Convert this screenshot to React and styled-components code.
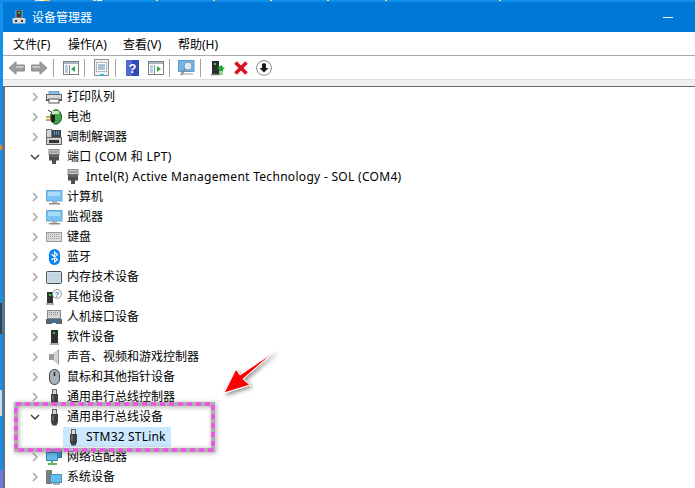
import React from 'react'
import styled, { createGlobalStyle } from 'styled-components'

const GlobalStyle = createGlobalStyle`
  html, body { margin: 0; padding: 0; background: #1391ea; }
  body { width: 695px; height: 488px; overflow: hidden; }
  #root { width: 695px; height: 488px; }
`
const FONT = `"Noto Sans", "Noto Sans CJK SC", sans-serif`

const Desktop = styled.div`
  position: relative;
  width: 695px;
  height: 488px;
  overflow: hidden;
  padding: 2px 0 0 3px;
  box-sizing: border-box;
  font-family: ${FONT};
`
const Bit = styled.div`
  position: absolute;
  left: ${p => p.$x}px;
  top: ${p => p.$y}px;
  width: ${p => p.$w}px;
  height: ${p => p.$h}px;
  background: ${p => p.$c};
`
const Window = styled.div`
  display: flex;
  flex-direction: column;
  height: 486px;
  background: #fff;
`
const TitleBar = styled.div`
  height: 30px;
  flex: none;
  background: #0078d7;
  display: flex;
  align-items: center;
  color: #fff;
  font-size: 12px;
  padding-left: 9px;
  gap: 6px;
  box-sizing: border-box;
`
const Minimize = styled.div`
  width: 10px;
  height: 1px;
  background: #fff;
  margin-left: auto;
  margin-right: 22px;
`
const MenuBar = styled.div`
  height: 23px;
  flex: none;
  display: flex;
  align-items: center;
  padding-left: 10px;
  gap: 18px;
  font-size: 12px;
  color: #000;
  border-bottom: 1px solid #a9a9a9;
`
const MenuItem = styled.span`
  width: 37px;
  white-space: nowrap;
`
const Toolbar = styled.div`
  height: 23px;
  flex: none;
  display: flex;
  align-items: center;
  padding-left: 2px;
`
const ToolButton = styled.div`
  width: 23px;
  height: 22px;
  display: flex;
  align-items: center;
  justify-content: center;
`
const ToolSep = styled.div`
  width: 1px;
  height: 18px;
  background: #a0a0a0;
  margin: 0 5px 0 2px;
`
const StatusGap = styled.div`
  height: 6px;
  flex: none;
  background: #efefef;
  border-top: 1px solid #dcdcdc;
`
const Tree = styled.div`
  flex: 1;
  border-top: 1px solid #6d6d6d;
  border-left: 2px solid #6d6d6d;
  display: flex;
  flex-direction: column;
  font-size: 12px;
  color: #000;
`
const Row = styled.div`
  height: 20px;
  flex: none;
  display: flex;
  align-items: center;
  white-space: nowrap;
`
const Chevron = styled.div`
  width: 12px;
  margin-left: 24px;
  margin-right: 4px;
  display: flex;
  justify-content: center;
`
const IconSlot = styled.div`
  width: 18px;
  height: 18px;
  flex: none;
  display: flex;
  align-items: center;
  justify-content: center;
  margin-right: 4px;
`
const ChildRow = styled(Row)`
  padding-left: 58px;
`
const ChildBody = styled.div`
  display: flex;
  align-items: center;
  height: 20px;
  padding-right: 5px;
  padding-left: 1px;
  background: ${p => (p.$selected ? '#cce8ff' : 'transparent')};
`
const ChildIcon = styled(IconSlot)`
  margin-right: 4px;
`
const Label = styled.span`
  padding-bottom: 2px;
  letter-spacing: ${p => p.$spacing || 0}px;
`
const Marquee = styled.svg`
  position: absolute;
  left: 6px;
  top: 394px;
  pointer-events: none;
`
const ArrowMark = styled.svg`
  position: absolute;
  left: 218px;
  top: 344px;
`

const Svg = ({ w = 16, h = 16, children }) => (
  <svg width={w} height={h} viewBox={`0 0 ${w} ${h}`}>{children}</svg>
)

const ChevronRight = () => (
  <svg width="8" height="10" viewBox="0 0 8 10"><path d="M2 1l4 4-4 4" fill="none" stroke="#a6a6a6" strokeWidth="1.5" /></svg>
)
const ChevronDown = () => (
  <svg width="10" height="8" viewBox="0 0 10 8"><path d="M1 2l4 4 4-4" fill="none" stroke="#404040" strokeWidth="1.5" /></svg>
)

const ArrowIcon = ({ flip }) => (
  <svg width="17" height="14" viewBox="0 0 17 14" style={flip ? { transform: 'scaleX(-1)' } : undefined}>
    <path d="M1 7L8 .8V4h8.4v6H8v3.2z" fill="#9c9c9c" stroke="#8a8a8a" />
    <path d="M8 5h7.5v2H8z" fill="#c9c9c9" />
  </svg>
)
const PanelIcon = ({ color, dir }) => (
  <Svg>
    <rect x="0.5" y="1.5" width="15" height="13" fill="#fff" stroke="#7f7f7f" />
    <rect x="1" y="2" width="14" height="2" fill="#a7b4c2" />
    <path d="M6.5 5v9" stroke="#8b8b8b" />
    <path d="M2 6h3M2 8h3M2 10h3M2 12h3" stroke="#6f9ac4" />
    <path d={dir === 'left' ? 'M12 6v6L8 9z' : 'M9 6v6l4-3z'} fill={color} />
  </Svg>
)
const SheetIcon = () => (
  <Svg w={16} h={18}>
    <rect x="0.5" y="0.5" width="14" height="16" fill="#f0f0f0" stroke="#8f8f8f" />
    <rect x="2.5" y="3.5" width="10" height="9" fill="#fff" stroke="#b9b9b9" />
    <path d="M4 6h7M4 8h7M4 10h7" stroke="#5e86b0" />
    <rect x="6" y="15" width="4" height="2" fill="#35b7ee" />
  </Svg>
)
const HelpIcon = () => (
  <Svg w={14} h={16}>
    <rect width="13" height="16" fill="#2f49b6" />
    <rect width="6" height="16" fill="#4f6ad0" />
    <text x="6.5" y="13" fontSize="13" fontWeight="700" textAnchor="middle" fill="#fff" fontFamily="Liberation Sans">?</text>
  </Svg>
)
const ScanIcon = () => (
  <Svg w={17} h={16}>
    <rect x="0.5" y="0.5" width="15.5" height="11" fill="#6fb7ea" stroke="#5a9ccc" />
    <circle cx="10" cy="6" r="4" fill="#d5ecfa" stroke="#8a9aa5" />
    <path d="M7 9l-4 6" stroke="#888" strokeWidth="2" />
    <path d="M4 14h11" stroke="#9b9b9b" />
  </Svg>
)
const TowerIcon = ({ upgrade }) => (
  <Svg w={14} h={16}>
    <path d="M1 1h7v13H1z" fill="#2e2e2e" />
    <rect x="3" y="3" width="2" height="2" fill="#27d13a" />
    <path d="M0 14.5h9" stroke="#777" strokeWidth="1.4" />
    {upgrade && <path d="M10 5l4 4h-2v2H8V9H6z" fill="#23a83a" />}
    {upgrade && <path d="M8 12h4M8 14h4" stroke="#23a83a" />}
  </Svg>
)
const RedCross = () => (
  <Svg w={14} h={14}>
    <path d="M1.5 1.5l11 11M12.5 1.5l-11 11" stroke="#d8141e" strokeWidth="3.6" />
  </Svg>
)
const DownCircle = () => (
  <Svg>
    <circle cx="8" cy="8" r="7.4" fill="#fff" stroke="#8a8a8a" />
    <path d="M6 3.5h4V8h2.5L8 12.5 3.5 8H6z" fill="#1c1c1c" />
  </Svg>
)

const PlugIcon = () => (
  <Svg w={12} h={16}>
    <rect x="1" y="0.5" width="10" height="5" fill="#c8c8c8" stroke="#8c8c8c" />
    <path d="M3 2v2M5 2v2M7 2v2M9 2v2" stroke="#777" />
    <path d="M1 5.5h10v6H8v3.5H4v-3.5H1z" fill="#4f4f4f" />
    <path d="M2 7h8" stroke="#7c7c7c" />
  </Svg>
)
const UsbIcon = () => (
  <Svg w={9} h={17}>
    <rect x="2.5" y="0.5" width="4" height="5" fill="#d8d8d8" stroke="#666" />
    <path d="M1 5h7v8l-1.5 3.5h-4L1 13z" fill="#3f3f3f" />
    <path d="M3 6v6" stroke="#8a8a8a" />
  </Svg>
)
const PrinterIcon = () => (
  <Svg w={16} h={13}>
    <rect x="3" y="0" width="10" height="4" fill="#7fc0ea" stroke="#6a7f90" strokeWidth="0.7" />
    <rect x="0.5" y="3.5" width="15" height="6" fill="#d8d8d8" stroke="#666" />
    <rect x="3" y="8" width="10" height="4" fill="#fff" stroke="#555" />
    <path d="M0 9h3M13 9h3" stroke="#333" />
  </Svg>
)
const BatteryIcon = () => (
  <Svg w={16} h={16}>
    <path d="M2 1l5 3" stroke="#333" />
    <ellipse cx="10" cy="8" rx="5.6" ry="7.2" fill="#3fa649" stroke="#2b5e31" />
    <path d="M6 2h7v3H6z" fill="#c7e6c4" />
    <path d="M0 8h5M0 11h5" stroke="#b58a2a" strokeWidth="1.4" />
    <path d="M5 6h4v7H5z" fill="#222" />
  </Svg>
)
const ModemIcon = () => (
  <Svg w={16} h={16}>
    <rect x="0.5" y="0.5" width="5" height="9" fill="#d5d5d5" stroke="#777" />
    <rect x="6" y="1" width="9" height="7" fill="#31475c" />
    <path d="M8 3h5M8 5h5" stroke="#9fd0ef" strokeDasharray="1 1" />
    <rect x="0.5" y="8.5" width="15" height="7" fill="#cfcfcf" stroke="#666" />
    <rect x="3" y="11" width="10" height="3" fill="#333" />
  </Svg>
)
const MonitorIcon = () => (
  <Svg w={17} h={15}>
    <rect x="0.5" y="0.5" width="15.5" height="10.5" fill="#79c4f2" stroke="#67a9d6" />
    <rect x="2" y="2" width="12" height="4" fill="#a9dcf8" />
    <rect x="6" y="11" width="5" height="2" fill="#b4b4b4" />
    <rect x="3" y="13" width="11" height="1.5" fill="#8f8f8f" />
  </Svg>
)
const KeyboardIcon = () => (
  <Svg w={16} h={10}>
    <rect x="0.5" y="0.5" width="15" height="9" fill="#dcdcdc" stroke="#9a9a9a" />
    <path d="M2 2.5h12M2 4.5h12M2 6.5h12" stroke="#9e9e9e" strokeDasharray="1 1" />
  </Svg>
)
const BluetoothIcon = () => (
  <Svg w={11} h={16}>
    <rect x="0" y="0" width="11" height="16" rx="5.5" fill="#0a84f0" />
    <path d="M2.5 5l6 5.5L5.5 13V3l3 2.5-6 5.5" fill="none" stroke="#fff" strokeWidth="1.1" />
  </Svg>
)
const MemoryIcon = () => (
  <Svg w={16} h={13}>
    <rect x="0.5" y="0.5" width="15" height="12" rx="1" fill="#cfdfea" stroke="#45525c" />
    <rect x="2" y="2" width="12" height="9" fill="#c3d6e4" />
  </Svg>
)
const UnknownIcon = () => (
  <Svg w={16} h={16}>
    <path d="M1 3h6v11H1z" fill="#333" />
    <rect x="3" y="5" width="2" height="2" fill="#27d13a" />
    <path d="M0 15h8" stroke="#888" strokeWidth="1.4" />
    <circle cx="11" cy="5" r="4.4" fill="#fff" stroke="#9a9a9a" />
    <text x="11" y="8" fontSize="8" fontWeight="700" textAnchor="middle" fill="#3a78c0" fontFamily="Liberation Sans">?</text>
  </Svg>
)
const HidIcon = () => (
  <Svg w={16} h={15}>
    <rect x="1.5" y="0.5" width="13" height="8" fill="#d5d5d5" stroke="#888" />
    <path d="M3 2.5h10M3 4.5h10" stroke="#8d8d8d" strokeDasharray="1 1" />
    <path d="M0 14V9h6v5zM10 14V9h6v5z" fill="#5a6370" />
    <path d="M6 9h4v4H6z" fill="#3a70b0" />
  </Svg>
)
const SoftwareIcon = () => (
  <Svg w={9} h={16}>
    <path d="M1 1h7v13H1z" fill="#2e2e2e" />
    <rect x="3" y="3" width="2" height="2" fill="#27d13a" />
    <path d="M0 15h9" stroke="#888" strokeWidth="1.4" />
  </Svg>
)
const SpeakerIcon = () => (
  <Svg w={11} h={16}>
    <path d="M0 5h4l6-5v16l-6-5H0z" fill="#9c9c9c" />
    <path d="M5 4l4-3v14l-4-3z" fill="#d2d2d2" />
  </Svg>
)
const MouseIcon = () => (
  <Svg w={11} h={16}>
    <rect x="0.5" y="0.5" width="10" height="15" rx="5" fill="#a8b2bd" stroke="#444" />
    <path d="M5.5 3v4" stroke="#333" strokeWidth="1.6" />
  </Svg>
)
const NetworkIcon = () => (
  <Svg w={16} h={16}>
    <rect x="4.5" y="0.5" width="11" height="8" fill="#3e8fc6" stroke="#2d6a96" />
    <rect x="0.5" y="3.5" width="11" height="8" fill="#64bcec" stroke="#3d84b5" />
    <path d="M6 12v2M2 15h9" stroke="#2ea43b" strokeWidth="1.6" />
  </Svg>
)
const SystemIcon = () => (
  <Svg w={16} h={15}>
    <rect x="0" y="0" width="6" height="14" fill="#7b7b7b" />
    <rect x="1" y="1" width="2" height="2" fill="#35d04a" />
    <rect x="4.5" y="4.5" width="11" height="8" fill="#64bcec" stroke="#4d93c0" />
    <path d="M7 14h7" stroke="#8c8c8c" strokeWidth="1.4" />
  </Svg>
)

const rows = [
  { label: '打印队列', icon: <PrinterIcon /> },
  { label: '电池', icon: <BatteryIcon /> },
  { label: '调制解调器', icon: <ModemIcon /> },
  { label: '端口 (COM 和 LPT)', icon: <PlugIcon />, open: true, spacing: 0.3 },
  { label: 'Intel(R) Active Management Technology - SOL (COM4)', icon: <PlugIcon />, child: true, spacing: 0.3 },
  { label: '计算机', icon: <MonitorIcon /> },
  { label: '监视器', icon: <MonitorIcon /> },
  { label: '键盘', icon: <KeyboardIcon /> },
  { label: '蓝牙', icon: <BluetoothIcon /> },
  { label: '内存技术设备', icon: <MemoryIcon /> },
  { label: '其他设备', icon: <UnknownIcon /> },
  { label: '人机接口设备', icon: <HidIcon /> },
  { label: '软件设备', icon: <SoftwareIcon /> },
  { label: '声音、视频和游戏控制器', icon: <SpeakerIcon /> },
  { label: '鼠标和其他指针设备', icon: <MouseIcon /> },
  { label: '通用串行总线控制器', icon: <UsbIcon /> },
  { label: '通用串行总线设备', icon: <UsbIcon />, open: true },
  { label: 'STM32 STLink', icon: <UsbIcon />, child: true, selected: true, spacing: 0.18 },
  { label: '网络适配器', icon: <NetworkIcon /> },
  { label: '系统设备', icon: <SystemIcon /> },
]

const desktopBits = [
  [35, 0, 5, 1, '#e8e8e8'], [40, 0, 4, 1, '#fff'], [44, 0, 6, 1, '#f5c84a'],
  [93, 0, 3, 1, '#ddd'], [97, 0, 5, 1, '#fff'], [156, 0, 2, 1, '#ffe08a'],
  [213, 0, 2, 1, '#f5c84a'], [270, 0, 2, 1, '#ffe08a'], [327, 0, 2, 1, '#ffe08a'],
  [385, 0, 2, 1, '#ffe08a'], [499, 0, 2, 1, '#ffe08a'],
  [0, 145, 2, 5, '#e08a1e'], [0, 303, 2, 31, '#3f3f3f'], [0, 390, 2, 26, '#d8d8d8'],
  [0, 470, 3, 18, '#6a78e8'],
]

export default function App() {
  return (
    <Desktop>
      <GlobalStyle />
      {desktopBits.map(([x, y, w, h, c], i) => (
        <Bit key={i} $x={x} $y={y} $w={w} $h={h} $c={c} />
      ))}
      <Window>
        <TitleBar>
          <Svg w={14} h={14}>
            <path d="M4 0h6v8H4z" fill="#3a3a3a" stroke="#ddd" strokeWidth="0.6" />
            <rect x="6" y="2" width="2" height="1.6" fill="#35d04a" />
            <rect x="0.5" y="8" width="13" height="5.5" rx="1" fill="#d8d8d8" />
            <rect x="3" y="10" width="2" height="2" fill="#333" />
            <rect x="9" y="10" width="2" height="2" fill="#333" />
          </Svg>
          设备管理器
          <Minimize />
        </TitleBar>
        <MenuBar>
          <MenuItem>文件(F)</MenuItem>
          <MenuItem>操作(A)</MenuItem>
          <MenuItem>查看(V)</MenuItem>
          <MenuItem>帮助(H)</MenuItem>
        </MenuBar>
        <Toolbar>
          <ToolButton><ArrowIcon /></ToolButton>
          <ToolButton><ArrowIcon flip /></ToolButton>
          <ToolSep />
          <ToolButton><PanelIcon color="#2eaa3d" dir="left" /></ToolButton>
          <ToolSep />
          <ToolButton><SheetIcon /></ToolButton>
          <ToolSep />
          <ToolButton><HelpIcon /></ToolButton>
          <ToolButton><PanelIcon color="#2eaa3d" dir="right" /></ToolButton>
          <ToolSep />
          <ToolButton><ScanIcon /></ToolButton>
          <ToolSep />
          <ToolButton><TowerIcon upgrade /></ToolButton>
          <ToolButton><RedCross /></ToolButton>
          <ToolButton><DownCircle /></ToolButton>
        </Toolbar>
        <StatusGap />
        <Tree>
          {rows.map(r => r.child ? (
            <ChildRow key={r.label}>
              <ChildBody $selected={r.selected}>
                <ChildIcon>{r.icon}</ChildIcon>
                <Label $spacing={r.spacing}>{r.label}</Label>
              </ChildBody>
            </ChildRow>
          ) : (
            <Row key={r.label}>
              <Chevron>{r.open ? <ChevronDown /> : <ChevronRight />}</Chevron>
              <IconSlot>{r.icon}</IconSlot>
              <Label $spacing={r.spacing}>{r.label}</Label>
            </Row>
          ))}
        </Tree>
      </Window>
      <Marquee width="218" height="66" viewBox="0 0 218 66">
        <defs>
          <filter id="bandBlur" x="-5%" y="-20%" width="110%" height="140%">
            <feGaussianBlur stdDeviation="2" />
          </filter>
        </defs>
        <rect x="11" y="11" width="197" height="46" fill="none" stroke="#000" strokeOpacity="0.28" strokeWidth="5" filter="url(#bandBlur)" />
        <rect x="10" y="10" width="197" height="46" fill="none" stroke="#a0a0a0" strokeOpacity="0.7" strokeWidth="4" />
        <rect x="10" y="10" width="197" height="46" fill="none" stroke="#f24fe8" strokeWidth="3.4" strokeDasharray="5 4" />
      </Marquee>
      <ArrowMark width="64" height="56" viewBox="0 0 64 56">
        <defs>
          <filter id="arrowShadow" x="-30%" y="-30%" width="160%" height="160%">
            <feDropShadow dx="2" dy="2" stdDeviation="2" floodColor="#000" floodOpacity="0.45" />
          </filter>
        </defs>
        <path d="M6 49L18 25l4 6L56 8 25 35l7 6z" fill="#f00" stroke="#fff" strokeWidth="1" filter="url(#arrowShadow)" />
      </ArrowMark>
    </Desktop>
  )
}
